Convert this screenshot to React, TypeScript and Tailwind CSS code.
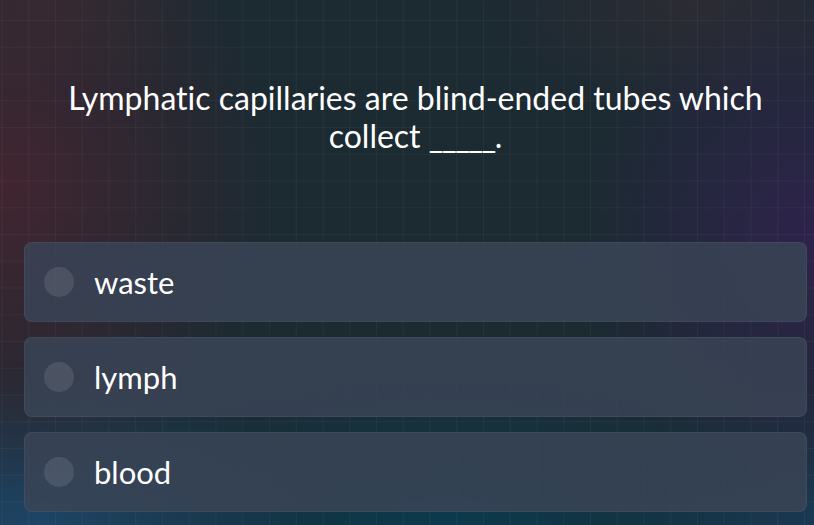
export default function App() {
  const options = ['waste', 'lymph', 'blood'];

  return (
    <div className="relative h-[525px] w-[814px] overflow-hidden bg-[#1c2a32] font-['Lato','Liberation_Sans',sans-serif] text-white [font-variant-ligatures:none]">
      {/* colour wash */}
      <div className="absolute inset-0 bg-[radial-gradient(ellipse_45%_80%_at_0%_35%,rgba(72,36,48,0.85),transparent_75%),radial-gradient(ellipse_38%_65%_at_100%_45%,rgba(48,34,78,0.9),transparent_75%),radial-gradient(ellipse_45%_40%_at_5%_100%,rgba(30,72,108,0.9),transparent_75%),radial-gradient(ellipse_70%_40%_at_55%_100%,rgba(10,60,80,0.9),transparent_75%),radial-gradient(ellipse_35%_35%_at_100%_100%,rgba(30,60,95,0.75),transparent_75%),radial-gradient(ellipse_35%_30%_at_85%_0%,rgba(55,45,52,0.6),transparent_75%),radial-gradient(ellipse_30%_25%_at_5%_0%,rgba(58,45,50,0.6),transparent_75%)]" />
      {/* grid */}
      <div className="absolute inset-0 bg-[linear-gradient(to_right,rgba(255,255,255,0.04)_1px,transparent_1px),linear-gradient(to_bottom,rgba(255,255,255,0.04)_1px,transparent_1px)] bg-[size:26.75px_26.75px] bg-[position:1.5px_20px]" />

      <div className="relative flex flex-col pl-6 pr-[7px]">
        <div className="flex h-[242px] items-start justify-center pt-[79px]">
          <p className="text-center text-[32px] leading-[38px]">
            Lymphatic capillaries are blind-ended tubes which
            <br />
            collect <span className="tracking-[-1.5px]">_____</span>.
          </p>
        </div>

        <div className="flex flex-col gap-[15px]">
          {options.map((o) => (
            <div
              key={o}
              className="flex h-[80px] items-center gap-[20px] rounded-[8px] border border-white/5 bg-[#3a4456]/85 pl-[19px]"
            >
              <span className="h-[30px] w-[30px] rounded-full bg-white/10" />
              <span className="text-[31px] leading-none">{o}</span>
            </div>
          ))}
        </div>
      </div>
    </div>
  );
}
